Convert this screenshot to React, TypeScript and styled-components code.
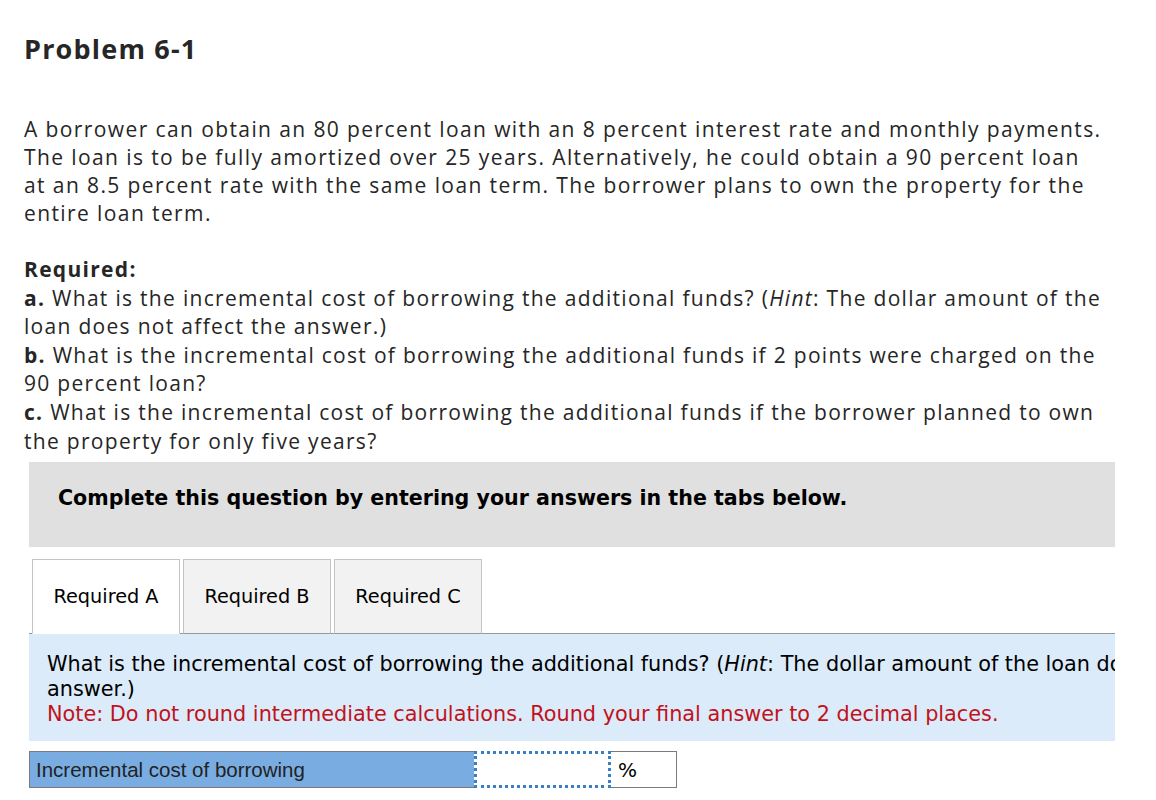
import React, { useState } from "react";
import styled, { createGlobalStyle } from "styled-components";

const GlobalStyle = createGlobalStyle`
  body {
    margin: 0;
    background: #fff;
    font-family: "Open Sans", "Lato", sans-serif;
    color: #262626;
  }
`;

const Page = styled.div`
  padding: 33px 0 0 24px;
  width: 1120px;
`;

const Title = styled.h1`
  margin: 0 0 50px;
  font-size: 27px;
  font-weight: 700;
  line-height: 32px;
  letter-spacing: 1.2px;
`;

const Para = styled.p`
  margin: 0 0 28px;
  font-size: 21px;
  line-height: 28px;
  letter-spacing: 1.4px;
  white-space: nowrap;
`;

const Required = styled.div`
  font-size: 21px;
  line-height: 28.6px;
  letter-spacing: 1.3px;
  white-space: nowrap;
`;

const Strong = styled.b`
  font-weight: 700;
`;

const Work = styled.div`
  margin: 7px 0 0 5px;
  width: 1086px;
  font-family: "DejaVu Sans", Verdana, sans-serif;
  color: #000;
`;

const Banner = styled.div`
  background: #e0e0e0;
  height: 85px;
  padding: 24px 0 0 29px;
  box-sizing: border-box;
  font-weight: 700;
  font-size: 20.6px;
  line-height: 24px;
`;

const TabRow = styled.div`
  display: flex;
  gap: 3px;
  margin-top: 12px;
  padding-left: 3px;
  border-bottom: 1px solid #999;
`;

const Tab = styled.button<{ $active?: boolean }>`
  width: 148px;
  height: 75px;
  margin-bottom: -1px;
  border: 1px solid #c4c4c4;
  border-bottom: ${(p) => (p.$active ? "1px solid #fff" : "1px solid #999")};
  background: ${(p) => (p.$active ? "#fff" : "#f2f2f2")};
  font-family: "DejaVu Sans", Verdana, sans-serif;
  font-size: 19.3px;
  color: #000;
  cursor: pointer;
  padding: 0;
`;

const Panel = styled.div`
  background: #dbebf9;
  height: 107px;
  overflow: hidden;
  padding: 18px 0 0 18px;
  box-sizing: border-box;
`;

const PanelText = styled.div`
  width: 1300px;
  font-size: 20.8px;
  line-height: 25px;
`;

const Note = styled.div`
  color: #c1121c;
  font-size: 20.8px;
`;

const AnswerRow = styled.div`
  display: flex;
  margin-top: 10px;
  height: 37px;
`;

const Label = styled.div`
  width: 445px;
  box-sizing: border-box;
  background: #79ade2;
  border: 1px solid #7a7a7a;
  border-right: none;
  font-family: "Liberation Sans", Arial, sans-serif;
  font-size: 20.5px;
  color: #222;
  padding: 6px 0 0 6px;
`;

const InputBox = styled.input`
  width: 137px;
  height: 37px;
  box-sizing: border-box;
  border: 3px dotted #3a7fc4;
  outline: none;
  background: #fff;
  padding: 0 6px;
  font-size: 18px;
`;

const Unit = styled.div`
  width: 66px;
  box-sizing: border-box;
  border: 1px solid #7a7a7a;
  border-left: none;
  font-size: 20px;
  padding: 6px 0 0 7px;
`;

export default function App() {
  const [tab, setTab] = useState(0);
  const [val, setVal] = useState("");
  const tabs = ["Required A", "Required B", "Required C"];
  return (
    <>
      <GlobalStyle />
      <Page>
        <Title>Problem 6-1</Title>
        <Para>
          A borrower can obtain an 80 percent loan with an 8 percent interest rate and monthly
          payments.
          <br />
          The loan is to be fully amortized over 25 years. Alternatively, he could obtain a 90
          percent loan
          <br />
          at an 8.5 percent rate with the same loan term. The borrower plans to own the property
          for the
          <br />
          entire loan term.
        </Para>
        <Required>
          <Strong>Required:</Strong>
          <br />
          <Strong>a.</Strong> What is the incremental cost of borrowing the additional funds? (
          <i>Hint</i>: The dollar amount of the
          <br />
          loan does not affect the answer.)
          <br />
          <Strong>b.</Strong> What is the incremental cost of borrowing the additional funds if 2
          points were charged on the
          <br />
          90 percent loan?
          <br />
          <Strong>c.</Strong> What is the incremental cost of borrowing the additional funds if the
          borrower planned to own
          <br />
          the property for only five years?
        </Required>
        <Work>
          <Banner>Complete this question by entering your answers in the tabs below.</Banner>
          <TabRow>
            {tabs.map((t, i) => (
              <Tab key={t} $active={tab === i} onClick={() => setTab(i)}>
                {t}
              </Tab>
            ))}
          </TabRow>
          <Panel>
            <PanelText>
              What is the incremental cost of borrowing the additional funds? (<i>Hint</i>: The
              dollar amount of the loan does not affect the
              <br />
              answer.)
              <Note>
                Note: Do not round intermediate calculations. Round your final answer to 2 decimal
                places.
              </Note>
            </PanelText>
          </Panel>
          <AnswerRow>
            <Label>Incremental cost of borrowing</Label>
            <InputBox value={val} onChange={(e) => setVal(e.target.value)} />
            <Unit>%</Unit>
          </AnswerRow>
        </Work>
      </Page>
    </>
  );
}
